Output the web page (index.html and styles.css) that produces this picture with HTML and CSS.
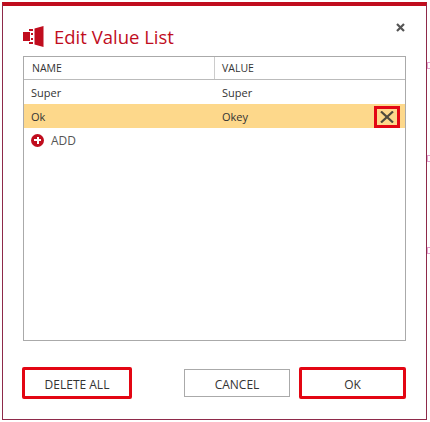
FILE: index.html
```html
<!DOCTYPE html>
<html>
    <head>
        <meta charset="utf-8">
        <title>Edit Value List</title>
        <link rel="stylesheet" href="styles.css">
    </head>
    <body>
        <div class="dialog">
            <div class="header">
                <svg class="logo" width="21" height="21" viewBox="0 0 21 21">
                    <path fill="#c00d1e" d="M11.500 2.500L20.500 0v21l-9-2.500zM0 6h7v9H0zM6 3h4v2H6zM8 7h2v2H8zM8 12h2v2H8zM6 16h4v2H6z"/>
                </svg>
                <h2>Edit Value List</h2>
                <svg class="close" width="9" height="9" viewBox="0 0 9 9">
                    <path stroke="#555" stroke-width="2.200" d="M1 1l7 7M8 1l-7 7"/>
                </svg>
            </div>
            <div class="list">
                <div class="row head">
                    <div class="cell name">NAME</div>
                    <div class="cell">VALUE</div>
                </div>
                <div class="row">
                    <div class="cell name">Super</div>
                    <div class="cell">Super</div>
                </div>
                <div class="row active">
                    <div class="cell name">Ok</div>
                    <div class="cell">Okey</div>
                    <span class="remove">
                        <svg width="14" height="12" viewBox="0 0 14 12">
                            <path stroke="#4f4a3c" stroke-width="2.200" d="M1 .5l12 11M13 .5l-12 11"/>
                        </svg>
                    </span>
                </div>
                <div class="add">
                    <span class="plus"></span>
                    <span>ADD</span>
                </div>
            </div>
            <div class="footer">
                <span class="btn marked btn-delete">DELETE ALL</span>
                <span class="btn btn-cancel">CANCEL</span>
                <span class="btn marked btn-ok">OK</span>
            </div>
        </div>
        <span class="mark mark-a"></span>
        <span class="mark mark-b"></span>
        <span class="mark mark-c"></span>
    </body>
</html>
```
FILE: styles.css
```css
*{
    margin: 0;
    padding: 0;
    box-sizing: border-box;
}
body{
    font-family: 'Open Sans', sans-serif;
    font-size: 11px;
    overflow: hidden;
    background-color: #fff;
    color: #333;
}
.dialog{
    width: 425px;
    height: 418px;
    margin: 2px 0 0 2px;
    border: 1px solid #8e2a4a;
    border-top: 4px solid #c00d1e;
    padding: 0 20px;
    display: flex;
    flex-direction: column;
}
.header{
    height: 50px;
    display: flex;
    align-items: center;
    padding-top: 10px;
}
.logo{
    margin-right: 10px;
}
.header h2{
    flex: 1;
    font-size: 18.500px;
    font-weight: normal;
    color: #c00d1e;
}
.close{
    align-self: flex-start;
    margin-top: 7px;
    margin-right: 1px;
}
.list{
    height: 285px;
    border: 1px solid #aaa;
}
.row{
    height: 24px;
    display: flex;
    align-items: center;
    position: relative;
}
.row.head{
    height: 23px;
    border-bottom: 1px solid #bbb;
    font-size: 10.500px;
}
.cell{
    padding-left: 7px;
    flex: 1;
    height: 100%;
    display: flex;
    align-items: center;
}
.name{
    flex: 0 0 191px;
}
.head .name{
    border-right: 1px solid #ccc;
    padding-left: 8px;
}
.active{
    background-color: #fdd88b;
}
.remove{
    position: absolute;
    right: 5px;
    top: 2px;
    width: 26px;
    height: 22px;
    border: 3px solid #e30613;
    display: flex;
    align-items: center;
    justify-content: center;
}
.add{
    height: 24px;
    display: flex;
    align-items: center;
    padding-left: 7px;
    color: #555;
    font-size: 12px;
}
.plus{
    width: 13px;
    height: 13px;
    border-radius: 50%;
    margin-right: 7px;
    background-color: #c00d1e;
    position: relative;
}
.plus:before,
.plus:after{
    content: '';
    position: absolute;
    background-color: #fff;
}
.plus:before{
    left: 3px;
    top: 5.500px;
    width: 7px;
    height: 2px;
}
.plus:after{
    left: 5.500px;
    top: 3px;
    width: 2px;
    height: 7px;
}
.footer{
    display: flex;
    align-items: center;
    margin-top: 26px;
    height: 32px;
    font-size: 12px;
}
.btn{
    display: flex;
    align-items: center;
    justify-content: center;
    height: 28px;
    border: 1px solid #aaa;
    padding-top: 2px;
}
.btn.marked{
    height: 32px;
    border: 3px solid #e30613;
    border-radius: 2px;
}
.btn-delete{
    width: 110px;
    margin-left: -1px;
}
.btn-cancel{
    width: 106px;
    margin-left: 52px;
}
.btn-ok{
    width: 107px;
    margin-left: 9px;
}
.mark{
    position: absolute;
    left: 427px;
    width: 3px;
    height: 7px;
    border: 1px solid #e3a0cf;
    border-right: none;
}
.mark-a{
    top: 62px;
}
.mark-b{
    top: 155px;
}
.mark-c{
    top: 247px;
}
```
